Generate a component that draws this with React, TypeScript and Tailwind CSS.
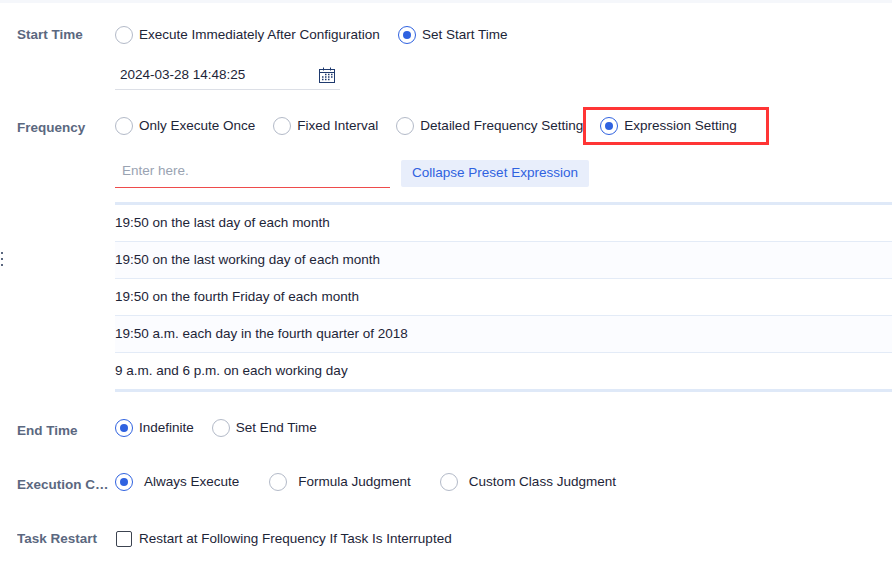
import React from "react";

const Label = ({ children, className = "" }: { children: React.ReactNode; className?: string }) => (
  <div className={`w-[92px] mr-[6px] shrink-0 truncate ml-[17px] font-bold text-[#5b6880] text-[13.5px] leading-[18px] ${className}`}>
    {children}
  </div>
);

const Radio = ({
  checked,
  label,
  gap = "gap-[6px]",
  className = "",
  textClassName = "",
}: {
  checked?: boolean;
  label: string;
  gap?: string;
  className?: string;
  textClassName?: string;
}) => (
  <label className={`flex items-start ${gap} ${className}`}>
    <span
      className={`flex h-[18px] w-[18px] shrink-0 items-center justify-center rounded-full border bg-white ${
        checked ? "border-[#2f62e0]" : "border-[#b3bac8]"
      }`}
    >
      {checked && <span className="h-[8px] w-[8px] rounded-full bg-[#2f62e0]" />}
    </span>
    <span className={`whitespace-nowrap text-[13.5px] leading-[18px] text-[#1d2538] ${textClassName}`}>{label}</span>
  </label>
);

const presets = [
  "19:50 on the last day of each month",
  "19:50 on the last working day of each month",
  "19:50 on the fourth Friday of each month",
  "19:50 a.m. each day in the fourth quarter of 2018",
  "9 a.m. and 6 p.m. on each working day",
];

export default function App() {
  return (
    <div className="relative h-[565px] w-[892px] overflow-hidden bg-white font-['Liberation_Sans',Arial,sans-serif]">
      <div className="h-[3px] bg-[#f5f7fb]" />

      {/* Start Time */}
      <div className="mt-[23px] flex items-center">
        <Label>Start Time</Label>
        <div className="flex">
          <Radio label="Execute Immediately After Configuration" />
          <Radio checked label="Set Start Time" className="ml-[18px]" />
        </div>
      </div>
      <div className="ml-[115px] mt-[16px] flex h-[30px] w-[225px] items-center justify-between border-b border-[#dcdfe6] pt-[2px] pl-[5px] pr-[5px]">
        <span className="text-[13.5px] text-[#1d2538]">2024-03-28 14:48:25</span>
        <svg className="-mt-[2px]" width="16" height="16" viewBox="0 0 16 16" fill="none" stroke="#1f3a6e" strokeWidth="1">
          <rect x="0.5" y="2.5" width="15" height="13" />
          <path d="M4.5 0.5v3M11.5 0.5v3M0.5 5.5h15" />
          <path d="M6 7.5h1.5M9 7.5h1.5M12 7.5h1.5M3 10h1.5M6 10h1.5M9 10h1.5M12 10h1.5M3 12.5h1.5M6 12.5h1.5M9 12.5h1.5" strokeWidth="1.5" />
        </svg>
      </div>

      {/* Frequency */}
      <div className="mt-[27px] flex items-start">
        <Label className="mt-[2px]">Frequency</Label>
        <div className="flex">
          <Radio label="Only Execute Once" />
          <Radio label="Fixed Interval" className="ml-[18px]" />
          <Radio label="Detailed Frequency Setting" className="ml-[18px]" />
          <Radio checked label="Expression Setting" className="ml-[17px]" />
        </div>
      </div>
      <div className="ml-[115px] mt-[23px] flex items-start">
        <div className="flex h-[28px] w-[275px] items-start border-b border-[#ee4b4b] pl-[7px] pt-[1px]">
          <span className="text-[13.5px] leading-[20px] text-[#9aa3b2]">Enter here.</span>
        </div>
        <button className="ml-[11px] h-[27px] w-[188px] rounded-[2px] bg-[#e8eefb] text-[13.5px] text-[#2f62e0]">
          Collapse Preset Expression
        </button>
      </div>

      {/* Preset expressions */}
      <div className="ml-[115px] mt-[14px] border-y-[3px] border-[#dfe9f8]">
        {presets.map((p, i) => (
          <div
            key={p}
            className={`flex items-center text-[13.5px] text-[#1d2538] ${i % 2 === 1 ? "bg-[#fbfcff]" : ""} ${
              i < presets.length - 1 ? "h-[37px] border-b border-[#e3ebf7]" : "h-[36px]"
            }`}
          >
            {p}
          </div>
        ))}
      </div>

      {/* End Time */}
      <div className="mt-[27px] flex items-start">
        <Label className="mt-[3px]">End Time</Label>
        <div className="flex">
          <Radio checked label="Indefinite" />
          <Radio label="Set End Time" className="ml-[18px]" />
        </div>
      </div>

      {/* Execution Condition */}
      <div className="mt-[33px] flex items-start">
        <Label className="mt-[3px]">Execution Condition</Label>
        <div className="flex">
          <Radio checked label="Always Execute" gap="gap-[11px]" />
          <Radio label="Formula Judgment" gap="gap-[11px]" className="ml-[30px]" />
          <Radio label="Custom Class Judgment" gap="gap-[11px]" className="ml-[29px]" />
        </div>
      </div>

      {/* Task Restart */}
      <div className="mt-[36px] flex items-center">
        <Label>Task Restart</Label>
        <label className="flex items-center gap-[7px] pl-px">
          <span className="h-[16px] w-[16px] rounded-[2px] border border-[#3c4350] bg-white" />
          <span className="text-[13.5px] leading-[18px] text-[#1d2538]">
            Restart at Following Frequency If Task Is Interrupted
          </span>
        </label>
      </div>

      {/* red annotation box */}
      <div className="absolute left-[583px] top-[107px] h-[38px] w-[186px] border-[3px] border-[#ff3535]" />

      {/* drag handle dots */}
      <div className="absolute left-[1px] top-[252px] flex flex-col gap-[4px]">
        <span className="h-[2px] w-[2px] bg-[#5b6880]" />
        <span className="h-[2px] w-[2px] bg-[#5b6880]" />
        <span className="h-[2px] w-[2px] bg-[#5b6880]" />
      </div>
    </div>
  );
}
